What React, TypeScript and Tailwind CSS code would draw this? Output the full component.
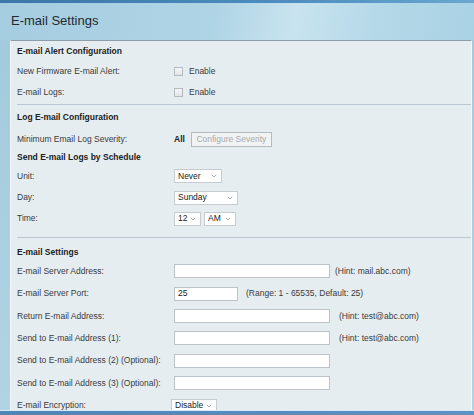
import React from "react"

const FONT = "font-['Liberation_Sans',Arial,sans-serif]"

function Caret() {
  return (
    <svg width="6" height="4" viewBox="0 0 6 4" className="shrink-0">
      <path d="M0.8 0.8 L3 3 L5.2 0.8" fill="none" stroke="#9aa3a8" strokeWidth="0.9" />
    </svg>
  )
}

function Select({ value, width, className = "" }: { value: string; width: string; className?: string }) {
  return (
    <div
      className={`${width} ${className} h-[14px] flex items-center justify-between bg-white border border-[#c6ccd0] pl-[3px] pr-[4px] text-[8.5px] text-[#222]`}
    >
      <span>{value}</span>
      <Caret />
    </div>
  )
}

function Input({ value = "", width = "w-[156px]" }: { value?: string; width?: string }) {
  return (
    <div className={`${width} h-[14px] flex items-center bg-white border border-[#bcc4c9] pl-[3px] text-[8.5px] text-[#222]`}>
      {value}
    </div>
  )
}

function Checkbox() {
  return <div className="w-[9px] h-[9px] border border-[#b4bbc0] bg-[linear-gradient(180deg,#f4f5f6,#e3e6e8)]" />
}

function Row({
  label,
  h = "h-[21px]",
  children,
}: {
  label: string
  h?: string
  children?: React.ReactNode
}) {
  return (
    <div className={`${h} flex items-center`}>
      <div className="w-[157px] shrink-0 text-[8.5px] text-[#3a3a3a] whitespace-nowrap">{label}</div>
      <div className="flex items-center">{children}</div>
    </div>
  )
}

function Heading({ children, className }: { children: React.ReactNode; className: string }) {
  return <div className={`${className} flex items-center text-[8.5px] font-bold text-[#222]`}>{children}</div>
}

function Hint({ children, className }: { children: React.ReactNode; className: string }) {
  return <span className={`${className} text-[8.5px] text-[#3a3a3a] whitespace-nowrap`}>{children}</span>
}

export default function App() {
  return (
    <div className={`${FONT} w-[474px] h-[415px] overflow-hidden flex flex-col bg-[#a6cce0]`}>
      {/* top strip */}
      <div className="h-[3px] shrink-0 bg-[linear-gradient(90deg,#3a76a8,#4d8dbf_60%,#6aa6cf)]" />

      {/* title band */}
      <div className="h-[37px] shrink-0 flex items-center pl-[11px] bg-[linear-gradient(100deg,#a5cde0_0%,#afd4e5_45%,#c8e3ef_62%,#b4d8e8_80%,#a9d2e4_100%)]">
        <h1 className="text-[13px] text-[#1e2a33] leading-none -mt-[3px]">E-mail Settings</h1>
      </div>

      {/* body */}
      <div className="flex-1 min-h-0 flex bg-[linear-gradient(180deg,#a3cadd,#b2d3e4)]">
        <div className="w-[10px] shrink-0" />
        <div className="flex-1 min-w-0 mr-[2px] overflow-hidden bg-[#e6edf0] border-t border-t-[#8e9ea8] border-l border-l-[#f3f7f9] border-r border-r-[#f3f7f9] pl-[6px]">
          {/* E-mail Alert Configuration */}
          <Heading className="h-[20px]">E-mail Alert Configuration</Heading>
          <Row label="New Firmware E-mail Alert:">
            <Checkbox />
            <span className="ml-[6px] text-[8.5px] text-[#3a3a3a]">Enable</span>
          </Row>
          <Row label="E-mail Logs:">
            <Checkbox />
            <span className="ml-[6px] text-[8.5px] text-[#3a3a3a]">Enable</span>
          </Row>
          <div className="mt-px border-t border-[#bcc8d1]" />

          {/* Log E-mail Configuration */}
          <Heading className="h-[25px]">Log E-mail Configuration</Heading>
          <Row label="Minimum Email Log Severity:" h="h-[19px]">
            <span className="text-[8.5px] font-bold text-[#222]">All</span>
            <div className="ml-[6px] h-[15px] w-[81px] flex items-center justify-center bg-[#f1f3f4] border border-[#b3bbc0] text-[8.5px] text-[#a4abb0]">
              Configure Severity
            </div>
          </Row>
          <Heading className="h-[16px]">Send E-mail Logs by Schedule</Heading>
          <Row label="Unit:" h="h-[22px]">
            <Select value="Never" width="w-[48px]" />
          </Row>
          <Row label="Day:">
            <Select value="Sunday" width="w-[64px]" />
          </Row>
          <Row label="Time:">
            <Select value="12" width="w-[27px]" />
            <Select value="AM" width="w-[32px]" className="ml-[3px]" />
          </Row>
          <div className="mt-[8px] border-t border-[#bcc8d1]" />

          {/* E-mail Settings */}
          <Heading className="h-[22px] pt-[6px]">E-mail Settings</Heading>
          <Row label="E-mail Server Address:" h="h-[22.4px]">
            <Input />
            <Hint className="ml-[5px]">(Hint: mail.abc.com)</Hint>
          </Row>
          <Row label="E-mail Server Port:" h="h-[22.4px]">
            <Input value="25" width="w-[64px]" />
            <Hint className="ml-[8px]">(Range: 1 - 65535, Default: 25)</Hint>
          </Row>
          <Row label="Return E-mail Address:" h="h-[22.4px]">
            <Input />
            <Hint className="ml-[9px]">(Hint: test@abc.com)</Hint>
          </Row>
          <Row label="Send to E-mail Address (1):" h="h-[22.4px]">
            <Input />
            <Hint className="ml-[9px]">(Hint: test@abc.com)</Hint>
          </Row>
          <Row label="Send to E-mail Address (2) (Optional):" h="h-[22.4px]">
            <Input />
          </Row>
          <Row label="Send to E-mail Address (3) (Optional):" h="h-[22.4px]">
            <Input />
          </Row>
          <Row label="E-mail Encryption:" h="h-[22.4px]">
            <Select value="Disable" width="w-[46px]" className="-ml-[3px]" />
          </Row>
        </div>
      </div>

      {/* bottom strip */}
      <div className="h-px shrink-0 bg-[#d6ebf5]" />
      <div className="h-[4px] shrink-0 bg-[linear-gradient(90deg,#4f84b6,#5d92c2)]" />
    </div>
  )
}
